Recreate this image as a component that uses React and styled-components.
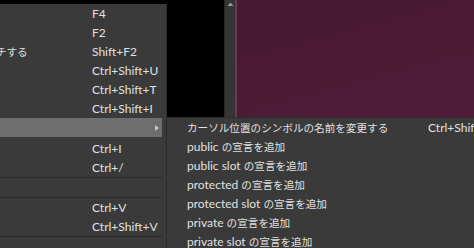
import React from 'react';
import styled, { createGlobalStyle } from 'styled-components';

const GlobalStyle = createGlobalStyle`
  html, body {
    margin: 0;
    padding: 0;
    background: #000;
  }
  body {
    width: 474px;
    height: 248px;
    overflow: hidden;
    font-family: Lato, "Noto Sans CJK JP", sans-serif;
  }
`;

const Screen = styled.div`
  position: relative;
  display: flex;
  width: 474px;
  height: 248px;
  overflow: hidden;
  background: #000;
`;

const Editor = styled.div`
  width: 224px;
  background: #000;
`;

const ScrollBar = styled.div`
  width: 11px;
  box-sizing: border-box;
  background: #343535;
  border-left: 1px solid #262626;
  display: flex;
  justify-content: center;
  padding-top: 1px;
`;

const WindowEdge = styled.div`
  width: 2px;
  background: #6b3a55;
`;

const Desktop = styled.div`
  flex: 1;
  background: linear-gradient(165deg, #461a2f 0%, #4f1c38 55%, #58203f 100%);
`;

const Menu = styled.div`
  position: absolute;
  left: ${p => p.$left}px;
  top: ${p => p.$top}px;
  width: ${p => p.$width}px;
  box-sizing: border-box;
  padding-right: 4px;
  background: #3a3a3a;
  border-right: 1px solid #2c2c2c;
  border-top: ${p => (p.$sub ? '1px solid #2e2e2e' : 'none')};
  color: #e0e0e0;
`;

const Item = styled.div`
  display: grid;
  grid-template-columns: ${p => p.$col}px 1fr;
  align-items: center;
  height: 19px;
  background: ${p => (p.$active ? '#6e6e6e' : 'transparent')};
  font-size: 12px;
  white-space: nowrap;
`;

const Label = styled.span`
  padding-left: ${p => p.$pad}px;
  overflow: hidden;
`;

const Shortcut = styled.span`
  display: flex;
  justify-content: space-between;
  align-items: center;
`;

const Ja = styled.span`
  font-family: "Noto Sans CJK JP", sans-serif;
  font-size: 10.6px;
`;

const Arrow = styled.span`
  width: 0;
  height: 0;
  margin-right: 3px;
  border-top: 3px solid transparent;
  border-bottom: 3px solid transparent;
  border-left: 4px solid #c8c8c8;
`;

const Spacer = styled.div`
  height: 2px;
`;

const Separator = styled.div`
  height: 1px;
  background: #2b2b2b;
`;

const UpIcon = () => (
  <svg width="7" height="6" viewBox="0 0 7 6">
    <path d="M0.5 5 L3.5 1.5 L6.5 5 Z" fill="#9a9a9a" />
  </svg>
);

const mainTop = [
  ['ヘッダ/ソース', 'F4'],
  ['定義へ移動', 'F2'],
  ['宣言/定義をスイッチする', 'Shift+F2'],
  ['使用箇所を検索', 'Ctrl+Shift+U'],
  ['型階層を開く', 'Ctrl+Shift+T'],
  ['インクルード', 'Ctrl+Shift+I'],
];

const subItems = [
  ['', 'カーソル位置のシンボルの名前を変更する', 'Ctrl+Shift+R'],
  ['public ', 'の宣言を追加'],
  ['public slot ', 'の宣言を追加'],
  ['protected ', 'の宣言を追加'],
  ['protected slot ', 'の宣言を追加'],
  ['private ', 'の宣言を追加'],
  ['private slot ', 'の宣言を追加'],
];

const MAIN_COL = 214;

const MainItem = ({ label, keys, active, arrow }) => (
  <Item $col={MAIN_COL} $active={active}>
    <Label $pad={29}><Ja>{label}</Ja></Label>
    <Shortcut>
      <span>{keys}</span>
      {arrow && <Arrow />}
    </Shortcut>
  </Item>
);

const App = () => (
  <>
    <GlobalStyle />
    <Screen>
      <Editor />
      <ScrollBar>
        <UpIcon />
      </ScrollBar>
      <WindowEdge />
      <Desktop />

      <Menu $left={-122} $top={4} $width={289}>
        {mainTop.map(([l, k]) => (
          <MainItem key={k} label={l} keys={k} />
        ))}
        <MainItem label="リファクタ" keys="" active arrow />
        <Spacer />
        <MainItem label="自動インデント" keys="Ctrl+I" />
        <MainItem label="コメント切替" keys="Ctrl+/" />
        <Separator />
        <MainItem label="選択範囲" keys="" />
        <Separator />
        <MainItem label="貼り付け" keys="Ctrl+V" />
        <MainItem label="履歴から貼付" keys="Ctrl+Shift+V" />
        <Separator />
        <MainItem label="" keys="" />
      </Menu>

      <Menu $left={167} $top={117} $width={340} $sub>
        {subItems.map(([en, ja, k]) => (
          <Item key={en + ja} $col={261}>
            <Label $pad={20}>
              {en}
              <Ja>{ja}</Ja>
            </Label>
            <Shortcut>
              <span>{k}</span>
            </Shortcut>
          </Item>
        ))}
      </Menu>
    </Screen>
  </>
);

export default App;
